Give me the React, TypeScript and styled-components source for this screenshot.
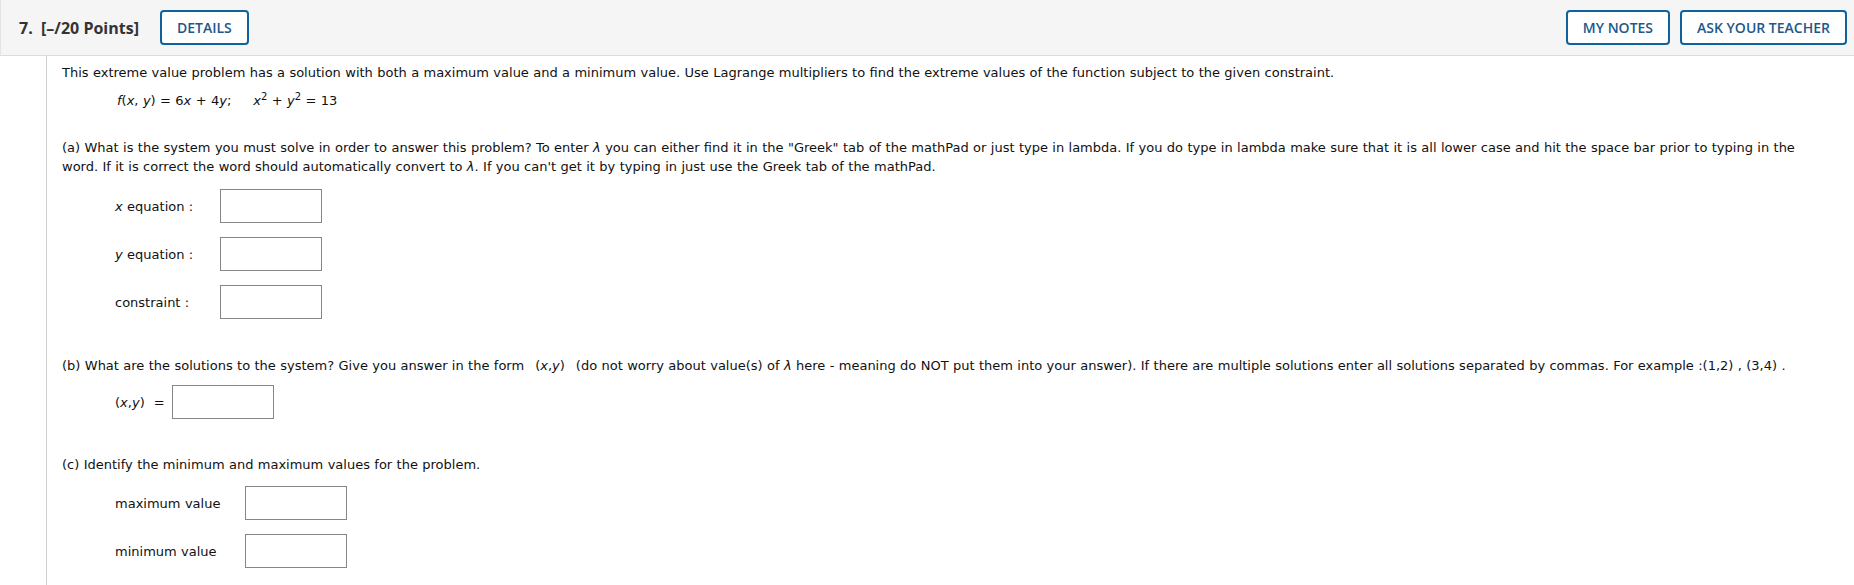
import React from "react";
import styled, { createGlobalStyle } from "styled-components";

const GlobalStyle = createGlobalStyle`
  html, body {
    margin: 0;
    padding: 0;
    background: #ffffff;
  }
  body {
    font-family: "DejaVu Sans", Verdana, sans-serif;
  }
`;

const Question = styled.div`
  width: 100%;
  min-height: 585px;
  display: flex;
  flex-direction: column;
`;

const Header = styled.div`
  display: flex;
  align-items: center;
  height: 56px;
  box-sizing: border-box;
  padding: 0 7px 0 18px;
  background: #f5f5f5;
  border-bottom: 1px solid #dcdcdc;
  border-left: 1px solid #e4e4e4;
`;

const Title = styled.div`
  font-family: "Open Sans", "Liberation Sans", sans-serif;
  font-weight: 700;
  font-size: 16px;
  color: #333333;
  white-space: pre;
`;

const Spacer = styled.div`
  flex: 1;
`;

const HeaderButton = styled.button<{ $lead?: number }>`
  height: 35px;
  box-sizing: border-box;
  margin-left: ${(p) => p.$lead ?? 10}px;
  padding: 0 15px;
  background: #ffffff;
  border: 2px solid #0f629b;
  border-radius: 4px;
  font-family: "Open Sans", "Liberation Sans", sans-serif;
  font-weight: 600;
  font-size: 14px;
  color: #21588a;
  text-transform: uppercase;
  cursor: pointer;
`;

const Body = styled.div`
  flex: 1;
  margin-left: 46px;
  border-left: 1px solid #cfcfcf;
  padding: 7px 49px 0 15px;
  font-family: "DejaVu Sans", Verdana, sans-serif;
  font-size: 13px;
  line-height: 19px;
  word-spacing: 0.25px;
  color: #111111;
`;

const Para = styled.p<{ $top?: number }>`
  margin: ${(p) => p.$top ?? 0}px 0 0 0;
`;

const Formula = styled.div<{ $top?: number }>`
  margin: ${(p) => p.$top ?? 0}px 0 0 55px;
  white-space: pre;
`;

const V = styled.i`
  font-style: italic;
`;

const Sup = styled.sup`
  font-size: 10px;
  line-height: 0;
  vertical-align: 5px;
`;

const Gap = styled.span<{ $w: number }>`
  display: inline-block;
  width: ${(p) => p.$w}px;
`;

const FieldTable = styled.div<{ $top?: number; $label: number }>`
  display: grid;
  grid-template-columns: ${(p) => p.$label}px auto;
  row-gap: 14px;
  align-items: center;
  justify-content: start;
  margin: ${(p) => p.$top ?? 0}px 0 0 53px;
`;

const Label = styled.div`
  white-space: nowrap;
`;

const AnswerBox = styled.div`
  width: 102px;
  height: 34px;
  box-sizing: border-box;
  border: 1px solid #868686;
  background: #ffffff;
`;

export default function App() {
  return (
    <>
      <GlobalStyle />
      <Question>
        <Header>
          <Title>{"7.  [–/20 Points]"}</Title>
          <HeaderButton $lead={21}>Details</HeaderButton>
          <Spacer />
          <HeaderButton $lead={0}>My Notes</HeaderButton>
          <HeaderButton $lead={10}>Ask Your Teacher</HeaderButton>
        </Header>
        <Body>
          <Para>
            This extreme value problem has a solution with both a maximum value and a minimum value. Use Lagrange
            multipliers to find the extreme values of the function subject to the given constraint.
          </Para>
          <Formula $top={9}>
            <V>f</V>(<V>x</V>, <V>y</V>) = 6<V>x</V> + 4<V>y</V>;<Gap $w={22} />
            <V>x</V>
            <Sup>2</Sup> + <V>y</V>
            <Sup>2</Sup> = 13
          </Formula>
          <Para $top={28}>
            (a) What is the system you must solve in order to answer this problem? To enter <V>λ</V> you can either
            find it in the "Greek" tab of the mathPad or just type in lambda. If you do type in lambda make sure that
            it is all lower case and hit the space bar prior to typing in the word. If it is correct the word should
            automatically convert to <V>λ</V>. If you can't get it by typing in just use the Greek tab of the
            mathPad.
          </Para>
          <FieldTable $top={13} $label={105}>
            <Label>
              <V>x</V> equation :
            </Label>
            <AnswerBox />
            <Label>
              <V>y</V> equation :
            </Label>
            <AnswerBox />
            <Label>constraint :</Label>
            <AnswerBox />
          </FieldTable>
          <Para $top={37}>
            (b) What are the solutions to the system? Give you answer in the form
            <Gap $w={11} />(<V>x</V>,<V>y</V>)<Gap $w={11} />
            (do not worry about value(s) of <V>λ</V> here - meaning do NOT put them into your answer). If there are
            multiple solutions enter all solutions separated by commas. For example :(1,2) , (3,4) .
          </Para>
          <FieldTable $top={10} $label={57}>
            <Label>
              (<V>x</V>,<V>y</V>)<Gap $w={9} />=
            </Label>
            <AnswerBox />
          </FieldTable>
          <Para $top={36}>(c) Identify the minimum and maximum values for the problem.</Para>
          <FieldTable $top={12} $label={130}>
            <Label>maximum value</Label>
            <AnswerBox />
            <Label>minimum value</Label>
            <AnswerBox />
          </FieldTable>
        </Body>
      </Question>
    </>
  );
}
